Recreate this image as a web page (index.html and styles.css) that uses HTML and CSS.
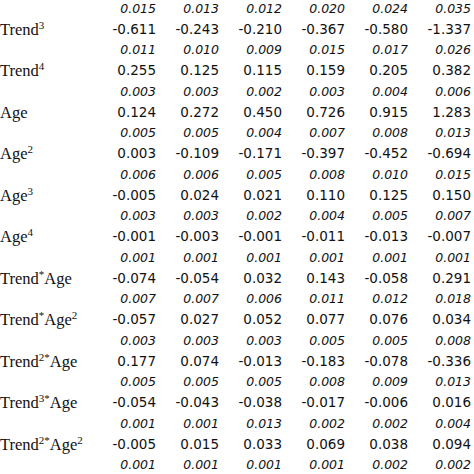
FILE: index.html
```html
<!DOCTYPE html>
<html lang="en">
<head>
<meta charset="UTF-8">
<title>Coefficients</title>
<link rel="stylesheet" href="styles.css">
</head>
<body>

<table class="coef">
    <tr class="se"><td class="label"></td><td>0.015</td><td>0.013</td><td>0.012</td><td>0.020</td><td>0.024</td><td>0.035</td></tr>
    <tr><td class="label">Trend<sup>3</sup></td><td>-0.611</td><td>-0.243</td><td>-0.210</td><td>-0.367</td><td>-0.580</td><td>-1.337</td></tr>
    <tr class="se"><td class="label"></td><td>0.011</td><td>0.010</td><td>0.009</td><td>0.015</td><td>0.017</td><td>0.026</td></tr>
    <tr><td class="label">Trend<sup>4</sup></td><td>0.255</td><td>0.125</td><td>0.115</td><td>0.159</td><td>0.205</td><td>0.382</td></tr>
    <tr class="se"><td class="label"></td><td>0.003</td><td>0.003</td><td>0.002</td><td>0.003</td><td>0.004</td><td>0.006</td></tr>
    <tr><td class="label">Age</td><td>0.124</td><td>0.272</td><td>0.450</td><td>0.726</td><td>0.915</td><td>1.283</td></tr>
    <tr class="se"><td class="label"></td><td>0.005</td><td>0.005</td><td>0.004</td><td>0.007</td><td>0.008</td><td>0.013</td></tr>
    <tr><td class="label">Age<sup>2</sup></td><td>0.003</td><td>-0.109</td><td>-0.171</td><td>-0.397</td><td>-0.452</td><td>-0.694</td></tr>
    <tr class="se"><td class="label"></td><td>0.006</td><td>0.006</td><td>0.005</td><td>0.008</td><td>0.010</td><td>0.015</td></tr>
    <tr><td class="label">Age<sup>3</sup></td><td>-0.005</td><td>0.024</td><td>0.021</td><td>0.110</td><td>0.125</td><td>0.150</td></tr>
    <tr class="se"><td class="label"></td><td>0.003</td><td>0.003</td><td>0.002</td><td>0.004</td><td>0.005</td><td>0.007</td></tr>
    <tr><td class="label">Age<sup>4</sup></td><td>-0.001</td><td>-0.003</td><td>-0.001</td><td>-0.011</td><td>-0.013</td><td>-0.007</td></tr>
    <tr class="se"><td class="label"></td><td>0.001</td><td>0.001</td><td>0.001</td><td>0.001</td><td>0.001</td><td>0.001</td></tr>
    <tr><td class="label">Trend<sup>*</sup>Age</td><td>-0.074</td><td>-0.054</td><td>0.032</td><td>0.143</td><td>-0.058</td><td>0.291</td></tr>
    <tr class="se"><td class="label"></td><td>0.007</td><td>0.007</td><td>0.006</td><td>0.011</td><td>0.012</td><td>0.018</td></tr>
    <tr><td class="label">Trend<sup>*</sup>Age<sup>2</sup></td><td>-0.057</td><td>0.027</td><td>0.052</td><td>0.077</td><td>0.076</td><td>0.034</td></tr>
    <tr class="se"><td class="label"></td><td>0.003</td><td>0.003</td><td>0.003</td><td>0.005</td><td>0.005</td><td>0.008</td></tr>
    <tr><td class="label">Trend<sup>2*</sup>Age</td><td>0.177</td><td>0.074</td><td>-0.013</td><td>-0.183</td><td>-0.078</td><td>-0.336</td></tr>
    <tr class="se"><td class="label"></td><td>0.005</td><td>0.005</td><td>0.005</td><td>0.008</td><td>0.009</td><td>0.013</td></tr>
    <tr><td class="label">Trend<sup>3*</sup>Age</td><td>-0.054</td><td>-0.043</td><td>-0.038</td><td>-0.017</td><td>-0.006</td><td>0.016</td></tr>
    <tr class="se"><td class="label"></td><td>0.001</td><td>0.001</td><td>0.013</td><td>0.002</td><td>0.002</td><td>0.004</td></tr>
    <tr><td class="label">Trend<sup>2*</sup>Age<sup>2</sup></td><td>-0.005</td><td>0.015</td><td>0.033</td><td>0.069</td><td>0.038</td><td>0.094</td></tr>
    <tr class="se"><td class="label"></td><td>0.001</td><td>0.001</td><td>0.001</td><td>0.001</td><td>0.002</td><td>0.002</td></tr>
</table>

</body>
</html>
```

FILE: styles.css
```css
body{
    margin:0;
    background:#fff;
    color:#111;
    overflow:hidden;
}

.coef{
    border-collapse:collapse;
    table-layout:fixed;
    width:471px;
    margin-top:-2px;
    font-family:"DejaVu Sans", sans-serif;
    font-size:13.5px;
}

.coef td{
    padding:0;
    height:20.75px;
    line-height:19px;
    width:63px;
    text-align:right;
    white-space:nowrap;
}

.coef td.label{
    width:93px;
    text-align:left;
    font-family:"Liberation Serif", serif;
    font-size:16.5px;
}

.coef .se td{
    font-style:italic;
    font-size:12.5px;
}

sup{
    font-size:11px;
    line-height:0;
    vertical-align:6px;
}
```
